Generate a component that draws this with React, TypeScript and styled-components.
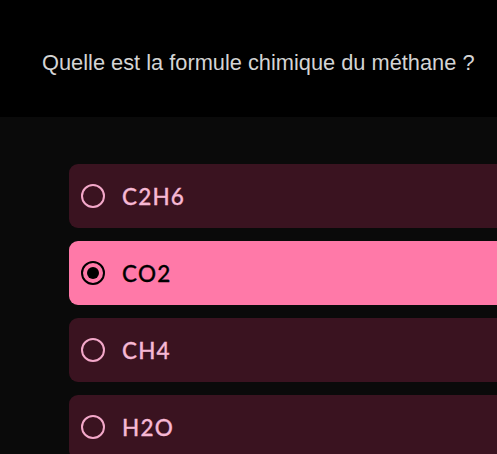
import React, { useState } from "react";
import styled, { createGlobalStyle } from "styled-components";

const Global = createGlobalStyle`
  html, body { margin: 0; padding: 0; background: #000; }
  body { width: 497px; height: 454px; overflow: hidden; }
`;

const Page = styled.div`
  width: 497px;
  height: 454px;
  display: flex;
  flex-direction: column;
  background: #0a0a0a;
  overflow: hidden;
`;

const Header = styled.header`
  height: 117px;
  flex-shrink: 0;
  background: #000;
  display: flex;
  align-items: center;
  padding-left: 42px;
  box-sizing: border-box;
`;

const Question = styled.h1`
  margin: 0;
  margin-top: 9px;
  font-family: "Liberation Sans", Arial, sans-serif;
  font-weight: 400;
  font-size: 21.8px;
  color: #d4d4d4;
  white-space: nowrap;
`;

const Options = styled.div`
  display: flex;
  flex-direction: column;
  gap: 13px;
  padding: 47px 0 0 69px;
  margin-right: -20px;
`;

const Option = styled.button<{ $selected: boolean }>`
  height: 64px;
  flex-shrink: 0;
  border: none;
  border-radius: 9px;
  background: ${(p) => (p.$selected ? "#ff79a8" : "#3a1320")};
  color: ${(p) => (p.$selected ? "#000" : "#f6b8d4")};
  display: flex;
  align-items: center;
  gap: 17px;
  padding: 0 0 0 12px;
  font-family: "Lato", "Inter", sans-serif;
  font-weight: 500;
  font-size: 22.5px;
  letter-spacing: 1.2px;
  -webkit-text-stroke: 0.3px currentColor;
  cursor: pointer;
  text-align: left;
`;

const Radio = styled.span<{ $selected: boolean }>`
  width: 24px;
  height: 24px;
  box-sizing: border-box;
  border-radius: 50%;
  border: 2px solid ${(p) => (p.$selected ? "#000" : "#f3a8c9")};
  display: flex;
  align-items: center;
  justify-content: center;
  flex-shrink: 0;
  &::after {
    content: "";
    display: ${(p) => (p.$selected ? "block" : "none")};
    width: 12px;
    height: 12px;
    border-radius: 50%;
    background: #000;
  }
`;

const Label = styled.span`
  margin-top: 1px;
`;

const answers = ["C2H6", "CO2", "CH4", "H2O"];

export default function App() {
  const [selected, setSelected] = useState(1);
  return (
    <Page>
      <Global />
      <Header>
        <Question>Quelle est la formule chimique du méthane ?</Question>
      </Header>
      <Options>
        {answers.map((a, i) => (
          <Option key={a} $selected={selected === i} onClick={() => setSelected(i)}>
            <Radio $selected={selected === i} />
            <Label>{a}</Label>
          </Option>
        ))}
      </Options>
    </Page>
  );
}
